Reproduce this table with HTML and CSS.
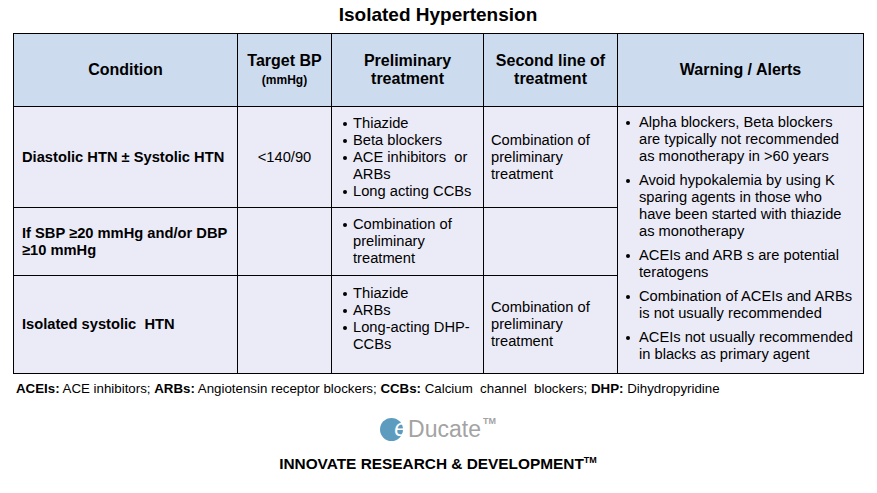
FILE: index.html
```html
<!DOCTYPE html>
<html>
<head>
<meta charset="utf-8">
<link rel="stylesheet" href="styles.css">
</head>
<body>
<div class="page">
  <h1 class="title">Isolated Hypertension</h1>
  <table class="grid">
    <colgroup>
      <col class="c1"><col class="c2"><col class="c3"><col class="c4"><col class="c5">
    </colgroup>
    <thead>
      <tr class="head">
        <th>Condition</th>
        <th>Target BP<br><span class="unit">(mmHg)</span></th>
        <th>Preliminary<br>treatment</th>
        <th>Second line of<br>treatment</th>
        <th>Warning / Alerts</th>
      </tr>
    </thead>
    <tbody>
      <tr class="r1">
        <td class="cond">Diastolic HTN ± Systolic HTN</td>
        <td class="center">&lt;140/90</td>
        <td><ul class="list"><li>Thiazide</li><li>Beta blockers</li><li>ACE inhibitors&nbsp; or ARBs</li><li>Long acting CCBs</li></ul></td>
        <td class="plain">Combination of<br>preliminary<br>treatment</td>
        <td rowspan="3" class="warn">
          <ul class="wlist">
            <li>Alpha blockers, Beta blockers are typically not recommended as monotherapy in &gt;60 years</li>
            <li>Avoid hypokalemia by using K sparing agents in those who have been started with thiazide as monotherapy</li>
            <li>ACEIs and ARB s are potential teratogens</li>
            <li>Combination of ACEIs and ARBs is not usually recommended</li>
            <li>ACEIs not usually recommended in blacks as primary agent</li>
          </ul>
        </td>
      </tr>
      <tr class="r2">
        <td class="cond">If SBP ≥20 mmHg and/or DBP ≥10 mmHg</td>
        <td></td>
        <td><ul class="list"><li>Combination of preliminary treatment</li></ul></td>
        <td></td>
      </tr>
      <tr class="r3">
        <td class="cond">Isolated systolic&nbsp; HTN</td>
        <td></td>
        <td class="raised"><ul class="list"><li>Thiazide</li><li>ARBs</li><li>Long-acting DHP-CCBs</li></ul></td>
        <td class="plain">Combination of<br>preliminary<br>treatment</td>
      </tr>
    </tbody>
  </table>
  <p class="note"><b>ACEIs:</b> ACE inhibitors; <b>ARBs:</b> Angiotensin receptor blockers; <b>CCBs:</b> Calcium&nbsp; channel&nbsp; blockers; <b>DHP:</b> Dihydropyridine</p>
  <div class="logo">
    <span class="mark"><span class="e">e</span></span><span class="word">Ducate</span><span class="tm">TM</span>
  </div>
  <p class="org">INNOVATE RESEARCH &amp; DEVELOPMENT<sup>TM</sup></p>
</div>
</body>
</html>
```
FILE: styles.css
```css
html, body {
  margin: 0;
  padding: 0;
  background: #ffffff;
}
body {
  font-family: "Liberation Sans", Arial, sans-serif;
  color: #000;
  width: 877px;
  height: 493px;
  overflow: hidden;
}
.page {
  padding: 4px 0 0 13px;
}
.title {
  margin: 0 0 8px 0;
  width: 850px;
  text-align: center;
  font-size: 19px;
  line-height: 21px;
  font-weight: bold;
}
.grid {
  border-collapse: collapse;
  table-layout: fixed;
  width: 850px;
  font-size: 14.7px;
  line-height: 17px;
}
.c1 { width: 224px; }
.c2 { width: 94px; }
.c3 { width: 152px; }
.c4 { width: 134px; }
.c5 { width: 246px; }
.grid th, .grid td {
  border: 1px solid #000;
  padding: 0;
  vertical-align: middle;
}
.grid th {
  background: #cddbee;
  font-size: 16px;
  line-height: 18px;
  font-weight: bold;
  text-align: center;
  height: 72px;
}
.grid td {
  background: #ebebf7;
}
.unit {
  font-size: 12px;
  line-height: 16px;
}
.r1 td { height: 100px; }
.r2 td { height: 67px; }
.r3 td { height: 97px; }
.r3 td.raised {
  height: 85px;
  padding-bottom: 12px;
}
.cond {
  font-weight: bold;
  padding-left: 8px !important;
}
.center {
  text-align: center;
}
.plain {
  padding-left: 7px !important;
}
.list, .wlist {
  list-style: none;
  margin: 0;
  padding: 0;
}
.list li, .wlist li {
  position: relative;
}
.list li {
  padding-left: 21px;
  padding-right: 2px;
}
.list li::before, .wlist li::before {
  content: "";
  position: absolute;
  width: 4px;
  height: 4px;
  border-radius: 50%;
  background: #000;
  top: 7px;
}
.list li::before { left: 11px; }
.warn {
  padding: 0 7px 0 0 !important;
}
.wlist li {
  padding-left: 21px;
  margin-bottom: 7px;
}
.wlist li:last-child { margin-bottom: 3px; }
.wlist li::before { left: 8px; }
.note {
  margin: 7px 0 0 3px;
  font-size: 13.3px;
  line-height: 16px;
}
.logo {
  width: 850px;
  display: flex;
  justify-content: center;
  align-items: center;
  margin-top: 16px;
  height: 32px;
  padding-left: 0;
  box-sizing: border-box;
}
.mark {
  width: 23px;
  height: 23px;
  border-radius: 50%;
  background: #5e9cbf;
  position: relative;
  display: inline-block;
}
.e {
  position: absolute;
  right: -4px;
  top: -1px;
  color: #fff;
  font-size: 23px;
  line-height: 23px;
  font-style: italic;
  font-family: "Liberation Sans", Arial, sans-serif;
}
.word {
  color: #a3a3a3;
  font-size: 23px;
  line-height: 26px;
  margin-left: 5px;
}
.tm {
  color: #a3a3a3;
  font-size: 9px;
  font-weight: bold;
  align-self: flex-start;
  margin-top: 3px;
  margin-left: 2px;
}
.org {
  width: 850px;
  text-align: center;
  margin: 10px 0 0 0;
  font-size: 15.4px;
  line-height: 18px;
  font-weight: bold;
}
.org sup {
  font-size: 9px;
  line-height: 0;
  vertical-align: 6px;
}
```
